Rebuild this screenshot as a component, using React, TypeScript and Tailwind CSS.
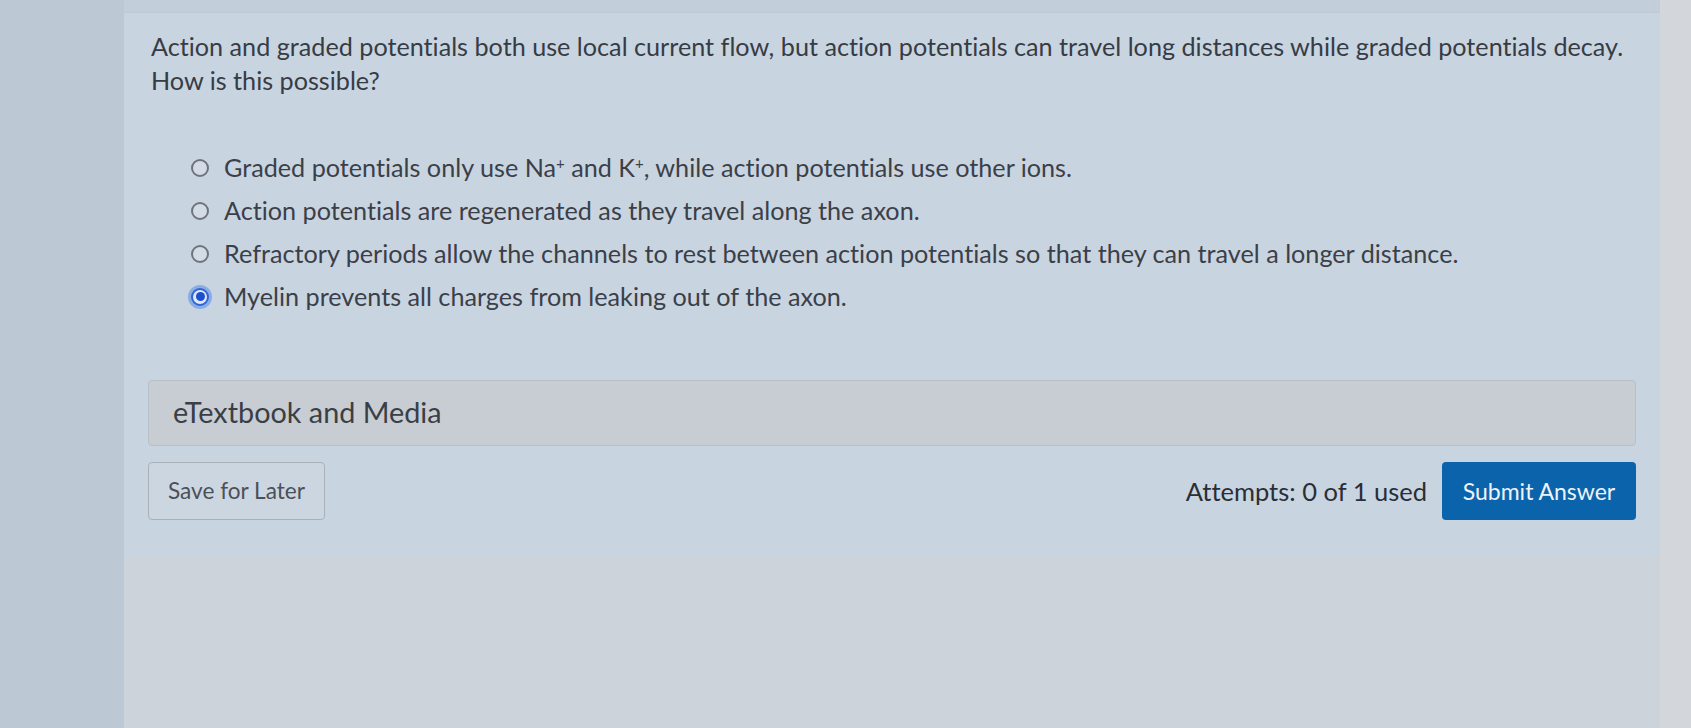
import React from "react";

const options: { key: string; content: React.ReactNode; selected?: boolean }[] = [
  {
    key: "a",
    content: (
      <>
        Graded potentials only use Na<sup className="text-[15px]">+</sup> and K<sup className="text-[15px]">+</sup>, while action potentials use other ions.
      </>
    ),
  },
  { key: "b", content: <>Action potentials are regenerated as they travel along the axon.</> },
  {
    key: "c",
    content: <>Refractory periods allow the channels to rest between action potentials so that they can travel a longer distance.</>,
  },
  { key: "d", content: <>Myelin prevents all charges from leaking out of the axon.</>, selected: true },
];

function Radio({ selected }: { selected?: boolean }) {
  if (selected) {
    return (
      <span className="flex h-[18px] w-[18px] shrink-0 items-center justify-center rounded-full border-2 border-[#2f63d6] bg-[#dfe7f3] shadow-[0_0_0_3px_rgba(74,134,232,0.5)]">
        <span className="h-[9px] w-[9px] rounded-full bg-[#1c4fd0]" />
      </span>
    );
  }
  return <span className="h-[18px] w-[18px] shrink-0 rounded-full border-2 border-[#6e747c] bg-[#d3dbe6]" />;
}

export default function App() {
  return (
    <div
      className="flex h-[728px] w-full overflow-hidden bg-[#d2d6db] text-[#373c44] [font-variant-ligatures:none]"
      style={{ fontFamily: "Lato, 'Open Sans', 'Liberation Sans', sans-serif" }}
    >
      <div className="h-full w-[124px] shrink-0 bg-[#bdc8d5]" />
      <div className="flex w-[1536px] shrink-0 flex-col">
        <div className="h-[12px] bg-[#c3cedb]" />
        <div className="flex flex-col border-t border-[#bfc8d3] bg-[#c9d4e1] px-[24px] pb-[35px] pt-[16px]">
          <p className="ml-[3px] w-[1490px] text-[25.2px] leading-[34px]">
            Action and graded potentials both use local current flow, but action potentials can travel long distances while graded potentials decay. How is this possible?
          </p>
          <div className="mt-[49px] flex flex-col pl-[43px]">
            {options.map((o) => (
              <label key={o.key} className="flex h-[43px] items-center gap-[15px] text-[25.2px]">
                <Radio selected={o.selected} />
                <span className="text-[#3b4048]">{o.content}</span>
              </label>
            ))}
          </div>
          <div className="mt-[62px] flex h-[66px] items-center rounded-[4px] border border-[#b9bfc6] bg-[#c7cdd3] pl-[24px] text-[28.8px] text-[#3a3f46]">
            eTextbook and Media
          </div>
          <div className="mt-[16px] flex items-center justify-between">
            <button className="h-[58px] w-[177px] rounded-[4px] border border-[#a9b0b8] bg-[#ccd6e1] pl-[19px] text-left text-[22.6px] text-[#4b5058]">
              Save for Later
            </button>
            <div className="flex items-center gap-[15px]">
              <span className="text-[25.5px] text-[#2a2e35]">Attempts: 0 of 1 used</span>
              <button className="h-[58px] w-[194px] rounded-[4px] bg-[#0b63ab] text-[23px] text-[#eef3f9]">
                Submit Answer
              </button>
            </div>
          </div>
        </div>
        <div className="flex-1 bg-[#cdd3da]" />
      </div>
      <div className="h-full flex-1 bg-[#d3d7db]" />
    </div>
  );
}
